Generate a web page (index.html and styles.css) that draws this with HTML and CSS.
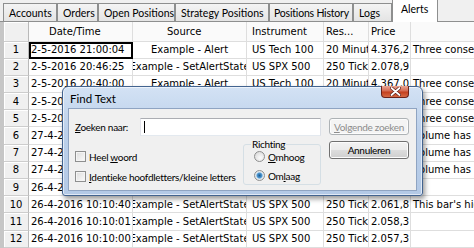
FILE: index.html
```html
<!DOCTYPE html>
<html lang="nl">
<head>
    <meta charset="UTF-8">
    <title>Alerts</title>
    <link rel="stylesheet" href="styles.css">
</head>
<body>
<div class="window">
    <!-- Tabbladen -->
    <div class="tabs">
        <div class="tab">Accounts</div>
        <div class="tab">Orders</div>
        <div class="tab">Open Positions</div>
        <div class="tab">Strategy Positions</div>
        <div class="tab">Positions History</div>
        <div class="tab">Logs</div>
        <div class="tab active">Alerts</div>
    </div>

    <!-- Alerts tabel -->
    <div class="grid">
        <div class="row head">
            <div class="cell num"></div>
            <div class="cell c-date">Date/Time</div>
            <div class="cell c-src">Source</div>
            <div class="cell c-instr">Instrument</div>
            <div class="cell">Res...</div>
            <div class="cell">Price</div>
            <div class="cell"></div>
        </div>
        <div class="row">
            <div class="cell num">1</div>
            <div class="cell sel">2-5-2016 21:00:04</div>
            <div class="cell src">Example - Alert</div>
            <div class="cell instr">US Tech 100</div>
            <div class="cell">20 Minutes</div>
            <div class="cell">4.376,2</div>
            <div class="cell">Three consecutive higher closes</div>
        </div>
        <div class="row">
            <div class="cell num">2</div>
            <div class="cell">2-5-2016 20:46:25</div>
            <div class="cell src">Example - SetAlertState</div>
            <div class="cell instr">US SPX 500</div>
            <div class="cell">250 Tick</div>
            <div class="cell">2.078,9</div>
            <div class="cell"></div>
        </div>
        <div class="row">
            <div class="cell num">3</div>
            <div class="cell">2-5-2016 20:40:00</div>
            <div class="cell src">Example - Alert</div>
            <div class="cell instr">US Tech 100</div>
            <div class="cell">20 Minutes</div>
            <div class="cell">4.367,0</div>
            <div class="cell">Three consecutive higher closes</div>
        </div>
        <div class="row">
            <div class="cell num">4</div>
            <div class="cell">2-5-2016 20:20:00</div>
            <div class="cell src">Example - Alert</div>
            <div class="cell instr">US Tech 100</div>
            <div class="cell">20 Minutes</div>
            <div class="cell">4.369,8</div>
            <div class="cell">Three consecutive higher closes</div>
        </div>
        <div class="row">
            <div class="cell num">5</div>
            <div class="cell">2-5-2016 20:00:00</div>
            <div class="cell src">Example - Alert</div>
            <div class="cell instr">US Tech 100</div>
            <div class="cell">20 Minutes</div>
            <div class="cell">4.371,5</div>
            <div class="cell">Three consecutive higher closes</div>
        </div>
        <div class="row">
            <div class="cell num">6</div>
            <div class="cell">27-4-2016 16:30:00</div>
            <div class="cell src">Example - Alert</div>
            <div class="cell instr">US SPX 500</div>
            <div class="cell">250 Tick</div>
            <div class="cell">2.093,4</div>
            <div class="cell">Volume has increased</div>
        </div>
        <div class="row">
            <div class="cell num">7</div>
            <div class="cell">27-4-2016 16:12:45</div>
            <div class="cell src">Example - Alert</div>
            <div class="cell instr">US SPX 500</div>
            <div class="cell">250 Tick</div>
            <div class="cell">2.091,0</div>
            <div class="cell">Volume has increased</div>
        </div>
        <div class="row">
            <div class="cell num">8</div>
            <div class="cell">27-4-2016 15:58:10</div>
            <div class="cell src">Example - Alert</div>
            <div class="cell instr">US SPX 500</div>
            <div class="cell">250 Tick</div>
            <div class="cell">2.088,6</div>
            <div class="cell">Volume has increased</div>
        </div>
        <div class="row">
            <div class="cell num">9</div>
            <div class="cell">26-4-2016 10:11:02</div>
            <div class="cell src">Example - SetAlertState</div>
            <div class="cell instr">US SPX 500</div>
            <div class="cell">250 Tick</div>
            <div class="cell">2.062,5</div>
            <div class="cell"></div>
        </div>
        <div class="row">
            <div class="cell num">10</div>
            <div class="cell">26-4-2016 10:10:40</div>
            <div class="cell src">Example - SetAlertState</div>
            <div class="cell instr">US SPX 500</div>
            <div class="cell">250 Tick</div>
            <div class="cell">2.061,8</div>
            <div class="cell">This bar's high is higher</div>
        </div>
        <div class="row">
            <div class="cell num">11</div>
            <div class="cell">26-4-2016 10:10:01</div>
            <div class="cell src">Example - SetAlertState</div>
            <div class="cell instr">US SPX 500</div>
            <div class="cell">250 Tick</div>
            <div class="cell">2.058,3</div>
            <div class="cell"></div>
        </div>
        <div class="row">
            <div class="cell num">12</div>
            <div class="cell">26-4-2016 10:10:00</div>
            <div class="cell src">Example - SetAlertState</div>
            <div class="cell instr">US SPX 500</div>
            <div class="cell">250 Tick</div>
            <div class="cell">2.057,3</div>
            <div class="cell"></div>
        </div>
    </div>

    <!-- Zoekvenster -->
    <div class="dialog">
        <div class="titlebar">
            <span class="title">Find Text</span>
            <span class="close">
                <svg width="11" height="9" viewBox="0 0 11 9">
                    <path d="M1.5 1 L9.5 8 M9.5 1 L1.5 8" stroke="#5a1a12" stroke-width="3.2" stroke-linecap="round"/>
                    <path d="M1.5 1 L9.5 8 M9.5 1 L1.5 8" stroke="#fff" stroke-width="1.8" stroke-linecap="round"/>
                </svg>
            </span>
        </div>
        <div class="client">
            <label class="find-label"><u>Z</u>oeken naar:</label>
            <div class="textbox"><span class="caret"></span></div>
            <div class="btn disabled"><span><u>V</u>olgende zoeken</span></div>
            <div class="options">
                <div class="check"><span class="box"></span><span>Heel <u>w</u>oord</span></div>
                <div class="check"><span class="box"></span><span><u>I</u>dentieke hoofdletters/kleine letters</span></div>
            </div>
            <fieldset class="direction">
                <legend>Richting</legend>
                <div class="radio"><span class="dot"></span><span><u>O</u>mhoog</span></div>
                <div class="radio checked"><span class="dot"></span><span>Om<u>l</u>aag</span></div>
            </fieldset>
            <div class="btn cancel"><span>Annuleren</span></div>
        </div>
    </div>
</div>
</body>
</html>
```

FILE: styles.css
```css
body {
    margin: 0;
    width: 474px;
    height: 248px;
    overflow: hidden;
    background: #fff;
    font-family: "DejaVu Sans", sans-serif;
    color: #000;
}

.window {
    position: relative;
    height: 248px;
    overflow: hidden;
}

/* Tabbladen */
.tabs {
    display: flex;
    align-items: flex-end;
    height: 22px;
    box-sizing: border-box;
    padding-left: 3px;
    background: #f0f0f0;
    border-bottom: 1px solid #8e8f8f;
    font: 10.5px Lato, sans-serif;
}

.tab {
    height: 18px;
    line-height: 18px;
    box-sizing: border-box;
    padding-left: 5px;
    border: 1px solid #8e8f8f;
    border-bottom: none;
    background: linear-gradient(#f4f4f4, #e4e4e4);
    white-space: nowrap;
}

/* Breedte van de tabbladen */
.tab:nth-child(1) { width: 54px; }  /*Accounts*/
.tab:nth-child(2) { width: 41px; }  /*Orders*/
.tab:nth-child(3) { width: 77px; }  /*Open Positions*/
.tab:nth-child(4) { width: 94px; }  /*Strategy Positions*/
.tab:nth-child(5) { width: 84px; padding-left: 4px; letter-spacing: -0.2px; }  /*Positions History*/
.tab:nth-child(6) { width: 39px; }  /*Logs*/

.tab.active {
    width: 46px;
    height: 23px;
    line-height: 19px;
    margin-bottom: -1px;
    padding-left: 8px;
    background: #fff;
}

/* Tabel */
.grid {
    border-left: 4px solid #c6c6c6;
    font-size: 10px;
}

.row {
    display: grid;
    grid-template-columns: 25px 104px 114px 77px 45px 42px 90px;
    height: 17.2px;
}

.row.head {
    height: 19.5px;
    background: #fafafa;
}

.cell {
    display: flex;
    align-items: center;
    box-sizing: border-box;
    padding-left: 2px;
    border-right: 1px solid #dedede;
    border-bottom: 1px solid #dedede;
    overflow: hidden;
    white-space: nowrap;
}

.cell.num {
    justify-content: center;
    padding-left: 0;
    background: #f0f0f0;
    border-right-color: #b9b9b9;
    border-bottom-color: #cdcdcd;
    box-shadow: inset 1px 1px #fff;
}

.cell.c-date { padding-left: 20px; }
.cell.c-src { padding-left: 34px; }
.cell.c-instr, .cell.instr { padding-left: 5px; }

.cell.src {
    justify-content: center;
    padding-left: 0;
}

.cell.sel {
    outline: 2px solid #000;
    outline-offset: -2px;
}

/* Dialoogvenster */
.dialog {
    position: absolute;
    left: 62px;
    top: 86px;
    width: 361px;
    height: 110px;
    box-sizing: border-box;
    display: flex;
    flex-direction: column;
    padding: 0 5px 4px 5px;
    border: 1px solid #42638f;
    border-radius: 6px 6px 3px 3px;
    background: linear-gradient(#d3e2f4, #bcd0ea 40%, #b3c9e6);
    box-shadow: 2px 3px 5px rgba(0, 0, 0, 0.4), inset 0 0 0 1px rgba(255, 255, 255, 0.6);
    font: 10px Lato, sans-serif;
    letter-spacing: -0.3px;
}

.titlebar {
    display: flex;
    justify-content: space-between;
    align-items: flex-start;
    height: 21px;
}

.title {
    margin: 5px 0 0 2px;
    font-size: 11.5px;
    letter-spacing: 0;
}

.close {
    display: flex;
    align-items: center;
    justify-content: center;
    width: 28px;
    height: 12px;
    margin: -1px 8px 0 0;
    box-sizing: border-box;
    border: 1px solid #6b2219;
    border-top: none;
    border-radius: 0 0 4px 4px;
    background: linear-gradient(#e9a594, #d46a52 45%, #c3401f 55%, #d66a45);
}

.client {
    flex: 1;
    display: grid;
    grid-template-columns: 65px 103px 78px 8px 80px;
    grid-template-rows: 18px 1fr;
    padding: 9px 0 0 6px;
    background: #f0f0f0;
    border: 1px solid #8fa4c2;
}

.find-label {
    align-self: center;
}

.textbox {
    grid-column: 2 / 4;
    display: flex;
    align-items: center;
    box-sizing: border-box;
    border: 1px solid #abadb3;
    border-color: #abadb3 #dbdfe6 #e3e9ef #e2e3ea;
    background: #fff;
}

.caret {
    width: 1px;
    height: 12px;
    margin-left: 3px;
    background: #000;
}

.btn {
    grid-column: 5;
    display: flex;
    align-items: center;
    justify-content: center;
    box-sizing: border-box;
    height: 18px;
    border: 1px solid #707070;
    border-radius: 3px;
    background: linear-gradient(#f2f2f2, #ebebeb 50%, #dddddd 50%, #cfcfcf);
    box-shadow: inset 0 0 0 1px #fcfcfc;
    white-space: nowrap;
}

.btn.disabled {
    height: 17px;
    color: #8d8d8d;
    border-color: #adb2b5;
    background: #f4f4f4;
}

.btn.cancel {
    grid-row: 2;
    margin-top: 5px;
}

.options {
    grid-column: 1 / 3;
    grid-row: 2;
    display: flex;
    flex-direction: column;
    gap: 7px;
    padding-top: 14px;
}

.check, .radio {
    display: flex;
    align-items: center;
    gap: 3px;
    height: 13px;
    white-space: nowrap;
}

.box {
    width: 11px;
    height: 11px;
    box-sizing: border-box;
    border: 1px solid #8e8f8f;
    background: linear-gradient(135deg, #dcdcdc, #fbfbfb);
    box-shadow: inset 0 0 0 1px #f4f4f4;
}

.direction {
    grid-column: 3;
    grid-row: 2;
    height: 47px;
    box-sizing: border-box;
    margin: 2px 0 0 0;
    padding: 0 0 0 10px;
    border: 1px solid #d5dfe5;
    border-radius: 3px;
    min-width: 0;
}

.direction legend {
    margin-left: -3px;
    padding: 0 1px;
}

.direction .radio + .radio {
    margin-top: 6px;
}

.dot {
    width: 11px;
    height: 11px;
    box-sizing: border-box;
    border: 1px solid #8e8f8f;
    border-radius: 50%;
    background: radial-gradient(circle at 60% 65%, #fcfcfc, #d4d4d4);
}

.radio.checked .dot {
    background: radial-gradient(circle, #1e5a8e 0, #4f9bd6 2.5px, #dfe8ee 3.5px, #e9e9e9);
}
```
